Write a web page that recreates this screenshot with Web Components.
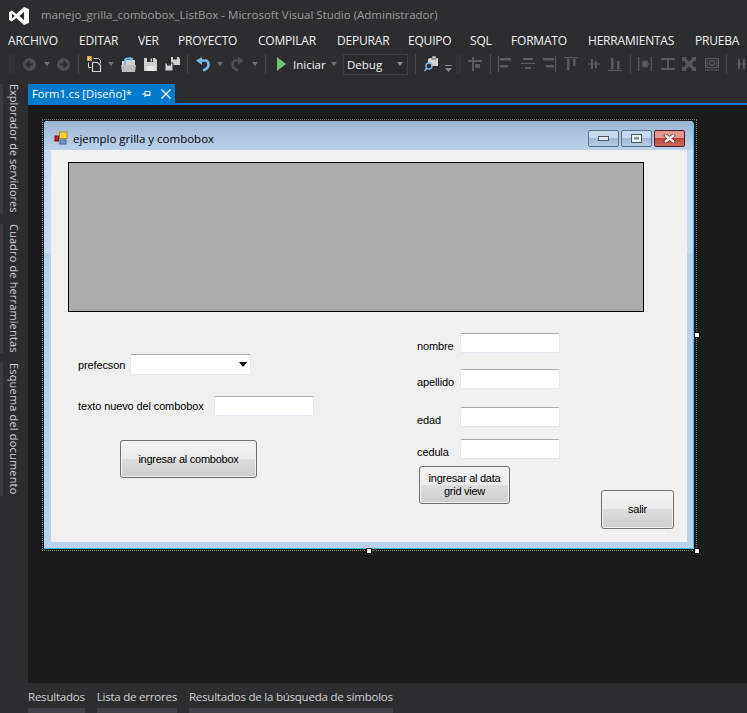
<!DOCTYPE html>
<html lang="es"><head><meta charset="utf-8"><title>manejo_grilla_combobox_ListBox</title>
<style>
html,body{margin:0;height:100%;overflow:hidden;background:#2d2d30}
</style></head><body>
<script>
const UI='"Open Sans","Noto Sans",sans-serif';
function def(name,css,html,extra){
  customElements.define(name,class extends HTMLElement{
    constructor(){super();const s=this.attachShadow({mode:'open'});
      s.innerHTML='<style>'+css+'</style>'+(typeof html==='function'?html(this):html);}
    connectedCallback(){ if(extra) extra(this); }
  });
}
const g='#5a5a5c', d='#4e4e50', l='#d0d0d0', b='#75b8ea';
const svg=(w,h,c)=>`<svg width="${w}" height="${h}" viewBox="0 0 ${w} ${h}" style="display:block">${c}</svg>`;
const drop=(c='#6e6e70')=>svg(6,4,`<path d="M0 0h6L3 4z" fill="${c}"/>`);
const grip=svg(5,20,`<path d="M1 0v20M4 1v20" stroke="#444447" stroke-dasharray="1 1" stroke-width="1"/>`);
const I={
 back:svg(13,13,`<circle cx="6.500" cy="6.500" r="6.500" fill="${d}"/><path d="M3 6.500h7M6.500 3.500l-3 3 3 3" stroke="#2d2d30" stroke-width="2" fill="none"/>`),
 fwd:svg(13,13,`<circle cx="6.500" cy="6.500" r="6.500" fill="${d}"/><path d="M3 6.500h7M6.500 3.500l3 3-3 3" stroke="#2d2d30" stroke-width="2" fill="none"/>`),
 newp:svg(15,16,`<path d="M0 0h5v5H0z" fill="#d8a04a"/><path d="M1 1h1v1H1zM3 1h1v1H3zM2 2h1v1H2zM1 3h1v1H1zM3 3h1v1H3z" fill="#f4e3b0"/><path d="M6.500 2.500h5l2 2v3M1.500 6.500v5" stroke="${l}" fill="none"/><path d="M5.500 6.500h5l3 3v6h-8z" stroke="${l}" fill="none" stroke-width="1.200"/><path d="M1.500 11.500h3" stroke="${l}"/>`),
 open:svg(15,15,`<path d="M1 4h3l1-1h9v12H1z" fill="${l}"/><path d="M0 8h15l-1 7H1z" fill="#bdbdbd"/><path d="M4 8V3.500Q4 1.500 7 1.500h3" stroke="${b}" stroke-width="2" fill="none"/><path d="M9 0l4 1.700-4 2.300z" fill="${b}"/>`),
 save:svg(13,13,`<path d="M0 0h11l2 2v11H0z" fill="${l}"/><path d="M3 0h6v4H3z" fill="#2d2d30"/><path d="M6.500 0.500h1.500v3H6.500z" fill="${l}"/><path d="M2.500 8h8v5h-8z" fill="#e8e8e8"/>`),
 saveall:svg(15,14,`<path d="M6 0h7.500L15 1.500V8H6z" fill="${l}"/><path d="M8 0h4v2.500H8z" fill="#2d2d30"/><path d="M0 6h8v8H0z" fill="${l}" stroke="#2d2d30"/><path d="M2 6h4v2.500H2z" fill="#2d2d30"/>`),
 undo:svg(14,15,`<path d="M4 3.500h5Q12.500 3.500 12.500 7.500T7 13.500" stroke="${b}" stroke-width="2.600" fill="none"/><path d="M6 0v8L0 3.500z" fill="${b}"/>`),
 redo:svg(13,15,`<path d="M9 3.500H5Q1.500 3.500 1.500 7.500T7 13.500" stroke="${d}" stroke-width="2.600" fill="none"/><path d="M7 0v8l6-4.500z" fill="${d}"/>`),
 play:svg(9,14,`<path d="M0 0l9 7-9 7z" fill="#72c472"/>`),
 find:svg(14,16,`<path d="M4 3l2-1h8v8H7V7H4z" fill="${l}"/><path d="M8 0h4v3H8z" fill="${l}" stroke="#2d2d30" stroke-width=".6"/><circle cx="5" cy="10" r="3" fill="none" stroke="${b}" stroke-width="1.400"/><path d="M3 12l-2.500 3" stroke="${b}" stroke-width="1.600"/>`),
 dropbar:svg(7,7,`<path d="M0 0h7v1H0z" fill="#8a8a8c"/><path d="M0 3h7L3.500 7z" fill="#8a8a8c"/>`),
 a0:svg(14,14,`<path d="M5 0v14" stroke="${g}" stroke-width="2"/><path d="M0 3h14v2H0z" fill="${g}"/><path d="M7 7h5v4H7z" fill="${g}"/>`),
 a1:svg(14,16,`<path d="M.5 0v16" stroke="${g}"/><path d="M2 2h11v2.500H2zM2 9h8v2.500H2z" fill="${g}"/>`),
 a2:svg(14,16,`<path d="M0 7.500h14" stroke="${g}"/><path d="M2 2h10v2H2zM4 11h6v2H4z" fill="${g}"/>`),
 a3:svg(14,16,`<path d="M13.500 0v16" stroke="${g}"/><path d="M1 2h11v2.500H1zM4 9h8v2.500H4z" fill="${g}"/>`),
 a4:svg(14,14,`<path d="M0 .5h14" stroke="${g}" stroke-width="1.400"/><path d="M3 2h2.500v11H3zM9 2h2.500v7H9z" fill="${g}"/>`),
 a5:svg(12,12,`<path d="M0 6h12" stroke="${g}"/><path d="M3 1h2v10H3zM7 3h2v7H7z" fill="${g}"/>`),
 a6:svg(14,14,`<path d="M0 13.500h14" stroke="${g}" stroke-width="1.400"/><path d="M3 1h2.500v11H3zM9 4h2.500v8H9z" fill="${g}"/>`),
 s1:svg(14,14,`<path d="M.5 0v14M13.500 0v14" stroke="${g}" stroke-width="1.400"/><path d="M4 4l6 6M10 4l-6 6M7 3v8M3 7h8" stroke="${g}" stroke-width="1.500"/>`),
 s2:svg(14,14,`<path d="M0 1h14v2H0zM0 11h14v2H0zM6 3h2v8H6z" fill="${g}"/>`),
 s3:svg(14,14,`<path d="M0 0h5L3.500 1.500 7 4.500 10.500 1.500 9 0h5v5L12.500 3.500 9.500 7l3 3.500L14 9v5H9l1.500-1.500L7 9.500 3.500 12.500 5 14H0V9l1.500 1.500L4.500 7l-3-3.500L0 5z" fill="${g}"/>`),
 s4:svg(14,14,`<rect x="2" y="1.500" width="10" height="9" fill="none" stroke="${g}"/><circle cx="7" cy="6" r="2.500" fill="none" stroke="${g}" stroke-width="1.300"/><path d="M0 13h14M.5 1v10M13.500 1v10" stroke="${g}" stroke-width="1.200"/>`),
 s5:svg(11,14,`<path d="M3 2v10M8 2v10" stroke="${g}" stroke-width="2"/><path d="M0 7h11" stroke="${g}"/>`),
};
const sep='<i class="sep"></i>';
/* [gap before, html] */
const tb=[[9,grip],[9,I.back],[8,drop()],[7,I.fwd],[8,sep],[8,I.newp],[6,drop()],[7,I.open],[8,I.save],[8,I.saveall],[7,sep],[8,I.undo],[7,drop()],[8,I.redo],[8,drop()],[7,sep],[11,I.play],[7,'<span class="t">Iniciar</span>'],[5,drop()],[6,'<span class="cb"><span>Debug</span>'+drop('#8a8a8c')+'</span>'],[7,sep],[8,I.find],[7,'<span class="dn">'+I.dropbar+'</span>'],[4,grip],[7,I.a0],[8,sep],[7,I.a1],[9,I.a2],[7,I.a3],[8,I.a4],[10,I.a5],[8,I.a6],[8,sep],[7,I.s1],[9,I.s2],[7,I.s3],[9,I.s4],[7,sep],[9,I.s5]];

def('vs-titlebar',`:host{display:flex;align-items:center;height:28px;flex:none;padding:3px 0 0 9px;box-sizing:border-box;color:#999;font:11.500px ${UI}}
 svg{display:block;margin-right:12px} span{white-space:nowrap;transform:translateY(-1px)}`,
 `<svg width="20" height="18" viewBox="0 0 20 18"><path fill="#fff" fill-rule="evenodd" d="M0 5 3 3.400 7.300 7 15 0 20 2V16L15 18 7.300 11 3 14.600 0 13ZM3 6.400V11.600L5.700 9ZM15 5 10.300 9 15 13Z"/></svg><span><slot></slot></span>`);
def('vs-menubar',`:host{display:flex;height:24px;flex:none;padding-left:8px;align-items:center;color:#f1f1f1;font:12px ${UI};letter-spacing:-.2px;white-space:nowrap;overflow:hidden}`,`<slot></slot>`);
def('vs-menuitem',`:host{display:block;flex:none}`,`<slot></slot>`);
def('vs-toolbar',`:host{display:flex;height:24px;flex:none;align-items:center;overflow:hidden;color:#f1f1f1;font:11.500px ${UI}}
 .c{flex:none;display:flex;align-items:center}
 .sep{display:block;width:1px;height:20px;background:#48484b}
 .t{display:block;width:33px;white-space:nowrap}
 .cb{display:flex;align-items:center;justify-content:space-between;width:65px;height:21px;box-sizing:border-box;border:1px solid #3f3f42;background:#2a2a2d;padding:0 4px 0 3px}
 .dn{display:block;margin-top:8px}`,
 tb.map(([m,h])=>`<div class="c" style="margin-left:${m}px">${h}</div>`).join(''));
def('vs-sidebar',`:host{display:flex;flex-direction:column;width:28px;flex:none;gap:10px;box-sizing:border-box}`,`<slot></slot>`);
def('vs-sidetab',`:host{display:block;box-sizing:border-box;border-left:3px solid #3a3a3f;padding:0 7px 1px 0;writing-mode:vertical-rl;color:#d0d0d0;font:11px/13px ${UI};white-space:nowrap}`,`<slot></slot>`);
def('vs-tabstrip',`:host{display:flex;flex:none;height:21px;box-sizing:border-box;border-bottom:2px solid #007acc}
 .tab{display:flex;align-items:center;width:147px;background:#007acc;color:#fff;font:11.200px ${UI};padding-left:4px;box-sizing:border-box;white-space:nowrap}
 svg{display:block;flex:none}`,
 `<div class="tab"><span><slot></slot></span>
 <svg style="margin-left:10px" width="10" height="10" viewBox="0 0 10 10"><path d="M3 2v6M3 5H0M3 2.500h5v4H3M3 6h5" stroke="#fff" fill="none"/></svg>
 <svg style="margin-left:9px" width="10" height="10" viewBox="0 0 10 10"><path d="M.5.5l9 9M9.500.5l-9 9" stroke="#fff" stroke-width="1.300"/></svg></div>`);
def('vs-designer',`:host{display:block;flex:1;min-height:0;background:#1c1c1c;padding:14px 0 0 14px;box-sizing:border-box}`,`<slot></slot>`);
def('vs-selection',`:host{display:block;position:relative;width:655px;height:432px;box-sizing:border-box;border:1px dotted #7c7c7c;padding:1px}
 i{position:absolute;width:4px;height:4px;background:#fff;border:1px solid #000}`,
 `<slot></slot><i style="right:-4px;top:212px"></i><i style="right:-4px;bottom:-4px"></i><i style="left:323px;bottom:-4px"></i>`);
def('wf-form',`:host{display:flex;flex-direction:column;width:650px;height:428px;box-sizing:border-box;border-radius:4px 4px 0 0;
  background:#b9d1ea;border-right:1px solid #3cc4ee;border-bottom:1px solid #3cc4ee;box-shadow:inset 0 1px #e8eef5;overflow:hidden}
 .cap{height:29px;flex:none;display:flex;align-items:center;padding:5px 8px 0 10px;box-sizing:border-box;background:linear-gradient(#9bb6d4,#bcd2eb);font:11.500px ${UI};color:#000}
 .ic{margin-right:5px;display:block}
 .btns{margin-left:auto;display:flex;gap:2px}
 .b{width:31px;height:17px;box-sizing:border-box;border:1px solid #5d7288;border-radius:2px;display:flex;align-items:center;justify-content:center;background:linear-gradient(#c5d8ec 0 45%,#9fb9d4 46%,#b4cbe2)}
 .b.x{border-color:#4f1d28;background:linear-gradient(#e39a8d 0 45%,#c0402f 46%,#c96b5d)}
 .body{flex:1;display:flex;min-height:0;padding:0 6px 6px 7px;background:linear-gradient(#c9dcf1,#c5d9f0 26%,#b9d1ea 26%)}
 .client{position:relative;flex:1;background:#f0f0f0}`,
 `<div class="cap"><svg class="ic" width="14" height="14" viewBox="0 0 14 14"><rect width="14" height="14" fill="#c9c4b4" opacity=".45"/><rect x="5.500" y="1" width="7.500" height="6.500" fill="#f6cf3c" stroke="#a88a1c"/><rect x="1" y="5" width="3.500" height="5" fill="#c8201c" stroke="#7a1010"/><rect x="6" y="9" width="6" height="4" fill="#6d9ad8" stroke="#3d62a0"/></svg>
 <span><slot name="title"></slot></span>
 <div class="btns"><div class="b"><svg width="11" height="5"><rect x=".5" y=".5" width="10" height="4" fill="#e8e8e8" stroke="#4a5868"/></svg></div>
 <div class="b"><svg width="11" height="9"><rect x=".5" y=".5" width="10" height="8" fill="#f0f0f0" stroke="#4a5868"/><rect x="3" y="3" width="5" height="2.500" fill="#7d94ae"/></svg></div>
 <div class="b x"><svg width="13" height="9" viewBox="0 0 13 9"><path d="M1.500 .5l10 8M11.500 .5l-10 8" stroke="#5a3030" stroke-width="3.800"/><path d="M2 1l9 7M11 1l-9 7" stroke="#f4f4f4" stroke-width="2.400"/></svg></div></div></div>
 <div class="body"><div class="client"><slot></slot></div></div>`);
def('wf-grid',`:host{position:absolute;display:block;box-sizing:border-box;background:#ababab;border:1px solid #000}`,``);
def('wf-label',`:host{position:absolute;display:block;font:11px/13px "Liberation Sans",Arial,sans-serif;letter-spacing:-.12px;color:#000;white-space:nowrap}`,`<slot></slot>`);
def('wf-textbox',`:host{position:absolute;display:block;box-sizing:border-box;background:#fff;border:1px solid #e2e8f0;border-top-color:#ababab;border-radius:2px}`,`<input aria-label="texto" style="all:unset;display:block;width:100%;height:100%">`);
def('wf-combo',`:host{position:absolute;display:flex;align-items:center;justify-content:flex-end;box-sizing:border-box;background:#fff;border:1px solid #e2e8f0;border-top-color:#ababab;border-radius:2px;padding-right:3px}`,
 `<svg width="8" height="5" viewBox="0 0 8 5"><path d="M0 0h8L4 5z" fill="#000"/></svg>`);
def('wf-button',`:host{position:absolute;display:block;box-sizing:border-box;border:1px solid #707070;border-radius:3px;background:#f0f0f0;padding:1px}
 div{height:100%;box-sizing:border-box;display:flex;align-items:center;justify-content:center;text-align:center;font:11px/13px "Liberation Sans",Arial,sans-serif;letter-spacing:-.25px;color:#000;background:linear-gradient(#f2f2f2,#ebebeb 50%,#dddddd 50%,#cfcfcf);border-radius:1px}`,
 `<div><slot></slot></div>`);
def('vs-bottomtabs',`:host{display:flex;height:30px;flex:none;gap:12px;color:#d0d0d0;font:11.500px ${UI};letter-spacing:-.22px}`,`<slot></slot>`);
def('vs-bottomtab',`:host{display:flex;flex-direction:column;justify-content:space-between;white-space:nowrap;padding-top:6px;box-sizing:border-box}
 i{display:block;height:5px;background:#3f3f46}`,`<span><slot></slot></span><i></i>`);
def('vs-shell',`:host{display:flex;flex-direction:column;width:747px;height:713px;background:#2d2d30;overflow:hidden}
 .gap{height:8px;flex:none}
 .main{flex:1;display:flex;min-height:0}
 .col{flex:1;display:flex;flex-direction:column;min-width:0}`,
 `<slot name="top"></slot><div class="gap"></div><div class="main"><slot name="side"></slot><div class="col"><slot></slot></div></div>`);
</script>
<vs-shell>
  <vs-titlebar slot="top">manejo_grilla_combobox_ListBox - Microsoft Visual Studio (Administrador)</vs-titlebar>
  <vs-menubar slot="top">
    <vs-menuitem style="width:71px">ARCHIVO</vs-menuitem><vs-menuitem style="width:59px">EDITAR</vs-menuitem><vs-menuitem style="width:40px">VER</vs-menuitem><vs-menuitem style="width:80px">PROYECTO</vs-menuitem><vs-menuitem style="width:79px">COMPILAR</vs-menuitem><vs-menuitem style="width:71px">DEPURAR</vs-menuitem><vs-menuitem style="width:62px">EQUIPO</vs-menuitem><vs-menuitem style="width:41px">SQL</vs-menuitem><vs-menuitem style="width:77px">FORMATO</vs-menuitem><vs-menuitem style="width:107px">HERRAMIENTAS</vs-menuitem><vs-menuitem>PRUEBA</vs-menuitem>
  </vs-menubar>
  <vs-toolbar slot="top"></vs-toolbar>
  <vs-sidebar slot="side">
    <vs-sidetab>Explorador de servidores</vs-sidetab>
    <vs-sidetab style="letter-spacing:.14px">Cuadro de herramientas</vs-sidetab>
    <vs-sidetab style="letter-spacing:.18px">Esquema del documento</vs-sidetab>
  </vs-sidebar>
  <vs-tabstrip>Form1.cs [Diseño]*</vs-tabstrip>
  <vs-designer>
    <vs-selection>
      <wf-form>
        <span slot="title">ejemplo grilla y combobox</span>
        <wf-grid style="left:17px;top:12px;width:576px;height:150px"></wf-grid>
        <wf-label style="left:27px;top:209px">prefecson</wf-label>
        <wf-combo style="left:79px;top:204px;width:121px;height:21px"></wf-combo>
        <wf-label style="left:27px;top:250px">texto nuevo del combobox</wf-label>
        <wf-textbox style="left:163px;top:246px;width:100px;height:20px"></wf-textbox>
        <wf-button style="left:69px;top:290px;width:137px;height:38px">ingresar al combobox</wf-button>
        <wf-label style="left:366px;top:190px">nombre</wf-label>
        <wf-textbox style="left:409px;top:183px;width:100px;height:20px"></wf-textbox>
        <wf-label style="left:366px;top:226px">apellido</wf-label>
        <wf-textbox style="left:409px;top:219px;width:100px;height:20px"></wf-textbox>
        <wf-label style="left:366px;top:264px">edad</wf-label>
        <wf-textbox style="left:409px;top:257px;width:100px;height:20px"></wf-textbox>
        <wf-label style="left:366px;top:296px">cedula</wf-label>
        <wf-textbox style="left:409px;top:289px;width:100px;height:20px"></wf-textbox>
        <wf-button style="left:368px;top:316px;width:91px;height:38px">ingresar al data<br>grid view</wf-button>
        <wf-button style="left:550px;top:340px;width:73px;height:39px">salir</wf-button>
      </wf-form>
    </vs-selection>
  </vs-designer>
  <vs-bottomtabs>
    <vs-bottomtab>Resultados</vs-bottomtab><vs-bottomtab>Lista de errores</vs-bottomtab><vs-bottomtab>Resultados de la búsqueda de símbolos</vs-bottomtab>
  </vs-bottomtabs>
</vs-shell>
</body></html>
